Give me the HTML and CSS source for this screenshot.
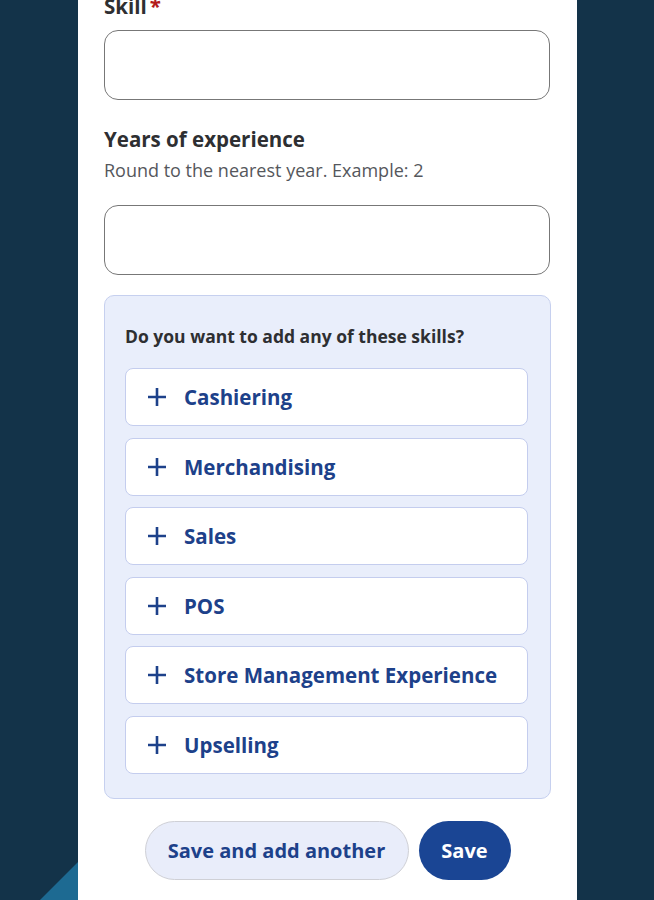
FILE: index.html
```html
<!DOCTYPE html>
<html>
<head>
	<meta charset="utf-8">
	<title>Add skill</title>
	<link rel="stylesheet" href="styles.css">
</head>
<body>
	<div class="backdrop">
		<div class="corner"></div>
		<div class="sheet">
			<label class="field-label first">Skill<span class="req">*</span></label>
			<input class="field" type="text">

			<label class="field-label">Years of experience</label>
			<p class="hint">Round to the nearest year. Example: 2</p>
			<input class="field" type="text">

			<div class="suggest">
				<h3>Do you want to add any of these skills?</h3>
				<ul class="chips">
					<li><button class="chip"><svg viewBox="0 0 20 20"><path d="M10 1v18M1 10h18"/></svg>Cashiering</button></li>
					<li><button class="chip"><svg viewBox="0 0 20 20"><path d="M10 1v18M1 10h18"/></svg>Merchandising</button></li>
					<li><button class="chip"><svg viewBox="0 0 20 20"><path d="M10 1v18M1 10h18"/></svg>Sales</button></li>
					<li><button class="chip"><svg viewBox="0 0 20 20"><path d="M10 1v18M1 10h18"/></svg>POS</button></li>
					<li><button class="chip"><svg viewBox="0 0 20 20"><path d="M10 1v18M1 10h18"/></svg>Store Management Experience</button></li>
					<li><button class="chip"><svg viewBox="0 0 20 20"><path d="M10 1v18M1 10h18"/></svg>Upselling</button></li>
				</ul>
			</div>

			<div class="actions">
				<button class="btn btn-secondary">Save and add another</button>
				<button class="btn btn-primary">Save</button>
			</div>
		</div>
	</div>
</body>
</html>
```

FILE: styles.css
```css
* {
	padding: 0;
	margin: 0;
	box-sizing: border-box;
}
html, body {
	height: 100%;
	overflow: hidden;
}
body {
	background: #133349;
	font-family: "Open Sans", Lato, sans-serif;
	color: #2e2f32;
}
.backdrop {
	position: relative;
	height: 900px;
}
/* lighter blue shape peeking out at the bottom left */
.corner {
	position: absolute;
	left: 40px;
	top: 860px;
	width: 40px;
	height: 40px;
	background: #1d6a92;
	clip-path: polygon(100% 0, 100% 100%, 0 100%);
}
.sheet {
	position: relative;
	display: flow-root;
	width: 499px;
	height: 900px;
	margin-left: 78px;
	background: #fff;
	padding: 0 26px;
}
.field-label {
	display: block;
	font-size: 20.5px;
	font-weight: 700;
	line-height: 24px;
	margin-top: 27px;
}
.field-label.first {
	margin-top: -6px;
}
.req {
	color: #b31b1b;
	margin-left: 3px;
}
.hint {
	font-size: 18px;
	line-height: 22px;
	color: #55575c;
	margin-top: 8px;
}
.field {
	display: block;
	width: 446px;
	height: 70px;
	margin-top: 12px;
	border: 1.5px solid #777;
	border-radius: 14px;
	background: #fff;
}
.hint + .field {
	margin-top: 24px;
}
.suggest {
	margin-top: 20px;
	width: 447px;
	background: #e9eefb;
	border: 1px solid #c6d0ef;
	border-radius: 10px;
	padding: 29px 22px 24px 20px;
}
.suggest h3 {
	font-size: 17.5px;
	line-height: 22px;
	font-weight: 700;
	color: #2e2f32;
}
.chips {
	list-style: none;
	display: flex;
	flex-direction: column;
	gap: 11.5px;
	margin-top: 21px;
}
.chip {
	display: flex;
	align-items: center;
	width: 100%;
	height: 58px;
	padding-left: 21px;
	background: #fff;
	border: 1px solid #c4cdee;
	border-radius: 8px;
	font-family: inherit;
	font-size: 20.5px;
	font-weight: 700;
	color: #1d418a;
	text-align: left;
}
.chip svg {
	width: 20px;
	height: 20px;
	margin-right: 17px;
	fill: none;
	stroke: #1d418a;
	stroke-width: 2.6;
}
.actions {
	display: flex;
	justify-content: center;
	gap: 10px;
	margin-top: 22px;
}
.btn {
	height: 59px;
	border-radius: 30px;
	font-family: inherit;
	font-size: 20px;
	font-weight: 700;
}
.btn-secondary {
	width: 264px;
	background: #e9edfa;
	border: 1.5px solid #cfd0d6;
	color: #1d418a;
}
.btn-primary {
	width: 92px;
	background: #1a4594;
	border: none;
	color: #fff;
}
```
